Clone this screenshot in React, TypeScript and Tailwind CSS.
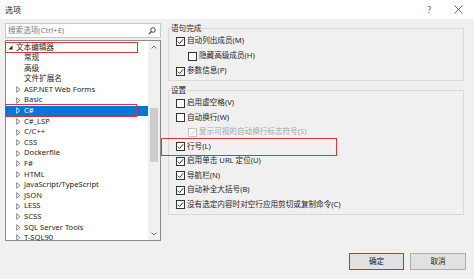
import React from 'react';

type TreeItem = { label: string; level: 0 | 1; kind: 'open' | 'closed' | 'leaf' };

const TREE: TreeItem[] = [
  { label: '文本编辑器', level: 0, kind: 'open' },
  { label: '常规', level: 1, kind: 'leaf' },
  { label: '高级', level: 1, kind: 'leaf' },
  { label: '文件扩展名', level: 1, kind: 'leaf' },
  ...[
    'ASP.NET Web Forms',
    'Basic',
    'C#',
    'C#_LSP',
    'C/C++',
    'CSS',
    'Dockerfile',
    'F#',
    'HTML',
    'JavaScript/TypeScript',
    'JSON',
    'LESS',
    'SCSS',
    'SQL Server Tools',
    'T-SQL90',
  ].map((label) => ({ label, level: 1 as const, kind: 'closed' as const })),
];

const Arrow: React.FC<{ kind: TreeItem['kind']; selected: boolean }> = ({ kind, selected }) => {
  if (kind === 'leaf') return null;
  if (kind === 'open')
    return (
      <svg width="5" height="5" viewBox="0 0 5 5">
        <polygon points="4.5,0.5 4.5,4.5 0.5,4.5" fill="#1e1e1e" />
      </svg>
    );
  return (
    <svg width="5" height="7" viewBox="0 0 5 7">
      <polygon points="0.7,0.7 3.9,3.5 0.7,6.3" fill="none" stroke={selected ? '#ffffff' : '#6a6a6a'} strokeWidth="0.8" />
    </svg>
  );
};

const Check: React.FC<{ checked?: boolean; disabled?: boolean }> = ({ checked, disabled }) => (
  <span
    className={`flex h-[9px] w-[9px] shrink-0 items-center justify-center border bg-white ${
      disabled ? 'border-[#c4c4c4]' : 'border-[#333333]'
    }`}
  >
    {checked && (
      <svg width="7" height="7" viewBox="0 0 7 7">
        <path d="M0.8 3.6 L2.7 5.5 L6.2 1.2" fill="none" stroke={disabled ? '#c4c4c4' : '#222222'} strokeWidth="0.9" />
      </svg>
    )}
  </span>
);

const Option: React.FC<{
  label: string;
  checked?: boolean;
  disabled?: boolean;
  indent?: boolean;
  tall?: boolean;
  marked?: boolean;
}> = ({ label, checked, disabled, indent, tall, marked }) => (
  <div className={`relative flex items-center gap-[2px] ${tall ? 'h-[15px]' : 'h-[14.5px]'} ${indent ? 'pl-[19px]' : 'pl-[7px]'}`}>
    <Check checked={checked} disabled={disabled} />
    <span className={`whitespace-nowrap ${disabled ? 'text-[#a6a6a6]' : 'text-[#1e1e1e]'}`}>{label}</span>
    {marked && <span className="absolute -top-[2px] left-[-8px] h-[18px] w-[176px] border border-[#d9333f]" />}
  </div>
);

const App: React.FC = () => {
  return (
    <div className="flex h-[279px] w-[474px] flex-col overflow-hidden bg-[#f0f0f0] font-['Noto_Sans','Noto_Sans_CJK_SC',sans-serif] text-[7.6px] leading-none text-[#1e1e1e]">
      {/* Title bar */}
      <div className="flex h-[19px] shrink-0 items-center bg-white pl-[5px]">
        <span className="text-[8px] text-[#222]">选项</span>
        <div className="ml-auto flex items-center">
          <span className="mr-[23px] text-[8px] text-[#555]">?</span>
          <svg width="9" height="9" viewBox="0 0 9 9" className="mr-[11px]">
            <path d="M0.5 0.5 L8.5 8.5 M8.5 0.5 L0.5 8.5" stroke="#444" strokeWidth="0.8" />
          </svg>
        </div>
      </div>

      <div className="flex h-[226px] shrink-0">
        {/* Left column */}
        <div className="flex w-[161px] shrink-0 flex-col pl-[5px] pt-[4px]">
          <div className="flex h-[15px] items-center border border-[#c9c9c9] bg-white pl-[2px] pr-[4px]">
            <span className="text-[#7a7a7a]">搜索选项(Ctrl+E)</span>
            <svg width="8" height="8" viewBox="0 0 8 8" className="ml-auto">
              <circle cx="5" cy="3" r="2.3" fill="none" stroke="#333" strokeWidth="0.9" />
              <path d="M3.3 4.7 L0.8 7.2" stroke="#333" strokeWidth="1.1" />
            </svg>
          </div>
          <div className="mt-[2px] flex h-[201px] border border-[#8c8c8c] bg-white">
            <div className="flex-1 pt-[1px]">
              {TREE.map((item) => {
                const selected = item.label === 'C#';
                return (
                  <div
                    key={item.label}
                    className={`relative flex h-[10.6px] items-center ${item.level === 0 ? 'pl-[2px]' : 'pl-[10px]'} ${
                      selected ? 'bg-[#0078d7] text-white' : ''
                    }`}
                  >
                    <span className="flex w-[8px] items-center">
                      <Arrow kind={item.kind} selected={selected} />
                    </span>
                    <span className="whitespace-nowrap">{item.label}</span>
                    {item.level === 0 && (
                      <span className="absolute left-[-1px] top-[-0.5px] h-[11px] w-[133px] border border-[#d9333f]" />
                    )}
                    {selected && <span className="absolute left-[-1px] top-[-1.5px] h-[12.5px] w-[132px] border border-[#d9333f]" />}
                  </div>
                );
              })}
            </div>
            {/* Scrollbar */}
            <div className="flex w-[12px] flex-col bg-[#f0f0f0]">
              <div className="flex h-[12px] items-center justify-center">
                <svg width="6" height="4" viewBox="0 0 6 4">
                  <path d="M0.6 3.4 L3 1 L5.4 3.4" fill="none" stroke="#606060" strokeWidth="0.9" />
                </svg>
              </div>
              <div className="flex-1">
                <div className="mx-[2px] mt-[55px] h-[54px] bg-[#cdcdcd]" />
              </div>
              <div className="flex h-[12px] items-center justify-center">
                <svg width="6" height="4" viewBox="0 0 6 4">
                  <path d="M0.6 0.6 L3 3 L5.4 0.6" fill="none" stroke="#606060" strokeWidth="0.9" />
                </svg>
              </div>
            </div>
          </div>
        </div>

        {/* Right column */}
        <div className="ml-[7px] flex w-[296px] shrink-0 flex-col pt-[5px]">
          <fieldset className="border border-[#d9d9d9] pb-[1.5px]">
            <legend className="ml-[2px] h-[9px] leading-[9px]">语句完成</legend>
            <div className="pt-[0.5px]">
              <Option label="自动列出成员(M)" checked tall />
              <Option label="隐藏高级成员(H)" indent tall />
              <Option label="参数信息(P)" checked tall />
            </div>
          </fieldset>
          <fieldset className="mt-[5px] border border-[#d9d9d9] pb-[1.5px]">
            <legend className="ml-[2px] h-[9px] leading-[9px]">设置</legend>
            <div className="pt-[1px]">
              <Option label="启用虚空格(V)" />
              <Option label="自动换行(W)" />
              <Option label="显示可视的自动换行标志符号(S)" checked disabled indent />
              <Option label="行号(L)" checked marked />
              <Option label="启用单击 URL 定位(U)" checked />
              <Option label="导航栏(N)" checked />
              <Option label="自动补全大括号(B)" checked />
              <Option label="没有选定内容时对空行应用剪切或复制命令(C)" checked />
            </div>
          </fieldset>
        </div>
      </div>

      {/* Footer buttons */}
      <div className="flex justify-end gap-[6px] pr-[8px] pt-[8px]">
        <button className="flex h-[17px] w-[55px] items-center justify-center border border-[#0078d7] bg-[#e1e1e1] text-[7.6px]">
          确定
        </button>
        <button className="flex h-[17px] w-[56px] items-center justify-center border border-[#adadad] bg-[#e1e1e1] text-[7.6px]">
          取消
        </button>
      </div>
    </div>
  );
};

export default App;
